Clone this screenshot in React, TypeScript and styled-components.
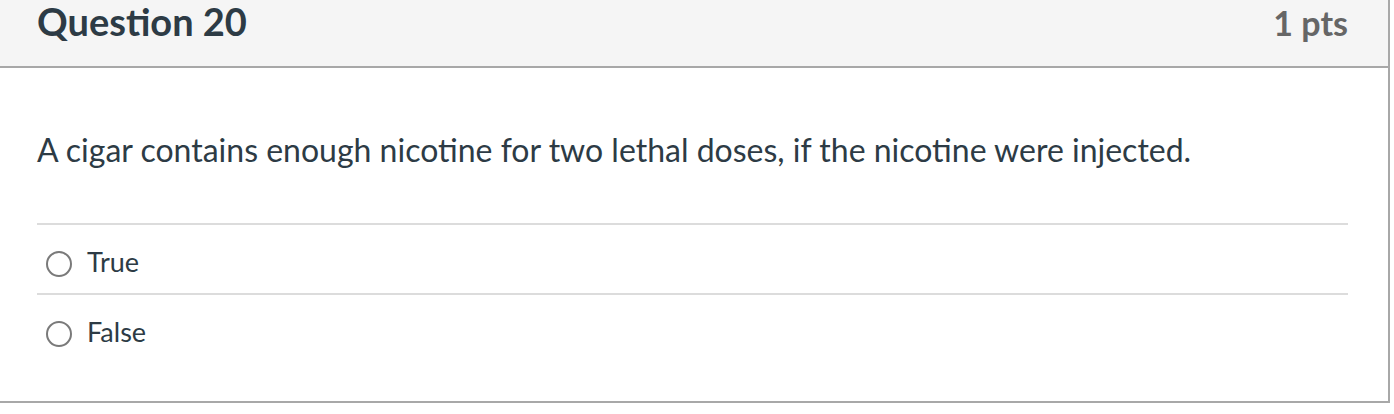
import React from "react"
import styled, { createGlobalStyle } from "styled-components"

const GlobalStyle = createGlobalStyle`
  body {
    margin: 0;
    background: #fff;
    font-family: Lato, "Noto Sans", sans-serif;
    color: #2d3b45;
  }
`

const Card = styled.section`
  width: 1392px;
  margin: -2px 0 0 -2px;
  border: 2px solid #a8a8a8;
  box-sizing: border-box;
  background: #fff;
`

const Header = styled.header`
  height: 66px;
  display: flex;
  align-items: baseline;
  justify-content: space-between;
  padding: 0 40px 0 37px;
  background: #f5f5f5;
  border-bottom: 2px solid #a8a8a8;
`

const Title = styled.h2`
  margin: 0;
  font-size: 38px;
  line-height: 42px;
  font-weight: 700;
  color: #2d3b45;
`

const Points = styled.span`
  font-size: 34px;
  line-height: 42px;
  font-weight: 700;
  color: #666;
`

const Body = styled.div`
  padding: 58px 40px 38px 37px;
`

const Prompt = styled.p`
  margin: 0 0 49px;
  font-size: 32px;
  line-height: 48px;
`

const AnswerList = styled.div`
  display: flex;
  flex-direction: column;
`

const Answer = styled.label`
  box-sizing: border-box;
  height: 70px;
  display: flex;
  align-items: center;
  gap: 15px;
  padding: 4px 0 0 9px;
  border-top: 2px solid #dcdcdc;
  font-size: 27px;
`

const Radio = styled.span`
  width: 22px;
  height: 22px;
  margin-top: 5px;
  border: 2px solid #7a7a7a;
  border-radius: 50%;
  flex: none;
`

const answers = ["True", "False"]

const App = () => {
  return (
    <>
      <GlobalStyle />
      <Card>
        <Header>
          <Title>Question 20</Title>
          <Points>1 pts</Points>
        </Header>
        <Body>
          <Prompt>
            A cigar contains enough nicotine for two lethal doses, if the nicotine were injected.
          </Prompt>
          <AnswerList>
            {answers.map((a) => (
              <Answer key={a}>
                <Radio />
                {a}
              </Answer>
            ))}
          </AnswerList>
        </Body>
      </Card>
    </>
  )
}

export default App
